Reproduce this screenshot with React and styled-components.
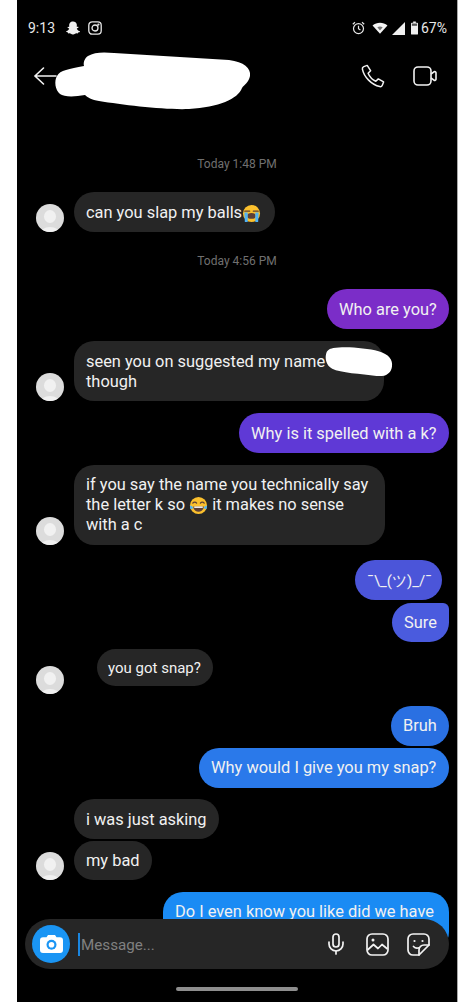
import React from 'react';
import styled, { createGlobalStyle } from 'styled-components';
import { FaSnapchatGhost } from 'react-icons/fa';
import { Mic } from 'lucide-react';

const GlobalStyle = createGlobalStyle`
  html, body {
    margin: 0;
    height: 1002px;
    overflow: hidden;
    background: #fff;
    font-family: Roboto, "Liberation Sans", sans-serif;
  }
`;

const Screen = styled.div`
  position: relative;
  width: 440px;
  height: 1002px;
  margin-left: 17px;
  background: #000;
  overflow: hidden;
  border-right: 1px solid #a8a8a8;
  color: #f1f1f1;
`;

const StatusBar = styled.div`
  display: flex;
  align-items: center;
  justify-content: space-between;
  height: 20px;
  padding: 18px 10px 0 11px;
  font-size: 14px;
  color: #e8e8e8;
`;

const StatusGroup = styled.div`
  display: flex;
  align-items: center;
  gap: ${(props) => props.$gap || 8}px;
`;

const Header = styled.div`
  display: flex;
  align-items: center;
  justify-content: space-between;
  height: 76px;
  padding: 0 20px 0 16px;
`;

const HeaderActions = styled.div`
  display: flex;
  align-items: center;
  gap: 28px;
`;

const Messages = styled.div`
  display: flex;
  flex-direction: column;
  padding: 43px 8px 0 19px;
`;

const Stamp = styled.div`
  height: 14px;
  line-height: 14px;
  text-align: center;
  font-size: 12px;
  color: #707070;
  margin-top: ${(props) => props.$top}px;
  margin-right: 11px;
`;

const Row = styled.div`
  position: relative;
  display: flex;
  align-items: flex-end;
  justify-content: ${(props) => (props.$mine ? 'flex-end' : 'flex-start')};
  margin-top: ${(props) => props.$top}px;
  margin-right: ${(props) => props.$inset || 0}px;
`;

const Avatar = styled.div`
  position: relative;
  flex: none;
  width: 28px;
  height: 28px;
  margin-right: 10px;
  margin-bottom: ${(props) => props.$drop || 0}px;
  border-radius: 50%;
  background: #dcdcdc;
  overflow: hidden;
  visibility: ${(props) => (props.$hidden ? 'hidden' : 'visible')};
  &::before {
    content: '';
    position: absolute;
    left: 8px;
    top: 6px;
    width: 12px;
    height: 13px;
    border-radius: 50%;
    background: #f1f1f1;
  }
  &::after {
    content: '';
    position: absolute;
    left: 4px;
    top: 23px;
    width: 20px;
    height: 14px;
    border-radius: 50%;
    background: #f1f1f1;
  }
`;

const Bubble = styled.div`
  box-sizing: border-box;
  width: ${(props) => props.$width}px;
  height: ${(props) => props.$height || 40}px;
  padding: ${(props) => props.$pad || '11px 12px 9px'};
  border-radius: 20px;
  border-top-right-radius: ${(props) => props.$corner || 20}px;
  background: ${(props) => props.$bg || '#262626'};
  font-size: ${(props) => props.$size || 16.4}px;
  line-height: 20px;
  white-space: pre;
  margin-left: ${(props) => props.$indent || 0}px;
`;

const Emoji = styled.svg`
  display: inline-block;
  vertical-align: middle;
  margin: -4px 0 -3px;
`;

const TitleScribble = styled.svg`
  position: absolute;
  left: 37px;
  top: 51px;
`;

const NameScribble = styled.svg`
  position: absolute;
  left: 289px;
  top: 5px;
`;

const Composer = styled.div`
  position: absolute;
  left: 8px;
  top: 919px;
  box-sizing: border-box;
  width: 424px;
  height: 50px;
  display: flex;
  align-items: center;
  padding: 0 19px 0 7px;
  border-radius: 25px;
  background: #262626;
`;

const CameraButton = styled.div`
  flex: none;
  display: flex;
  align-items: center;
  justify-content: center;
  width: 38px;
  height: 38px;
  border-radius: 50%;
  background: #1a95f4;
`;

const Placeholder = styled.div`
  flex: 1;
  height: 23px;
  line-height: 25px;
  margin-left: 8px;
  padding-left: 1px;
  border-left: 2px solid #1a86e0;
  font-size: 15.2px;
  color: #808080;
`;

const ComposerIcons = styled.div`
  display: flex;
  align-items: center;
  gap: 18px;
`;

const HomeBar = styled.div`
  position: absolute;
  left: 159px;
  top: 987px;
  width: 122px;
  height: 4px;
  border-radius: 2px;
  background: #8e8e8e;
`;

const InstagramGlyph = () => (
  <svg width="14" height="14" viewBox="0 0 14 14" fill="none" stroke="#e8e8e8" strokeWidth="1.3">
    <rect x="0.8" y="0.8" width="12.4" height="12.4" rx="3.4" />
    <circle cx="7" cy="7" r="3" />
    <circle cx="10.4" cy="3.6" r="0.5" fill="#e8e8e8" />
  </svg>
);

const AlarmGlyph = () => (
  <svg width="13" height="14" viewBox="0 0 13 14" fill="none" stroke="#e8e8e8" strokeWidth="1.2">
    <circle cx="6.5" cy="7.6" r="5" />
    <path d="M6.5 4.8v3l1.9 1.3M0.8 3.2 3 1.2M12.2 3.2 10 1.2" />
  </svg>
);

const WifiGlyph = () => (
  <svg width="16" height="14" viewBox="0 0 18 14">
    <path d="M9 13.500.6 4.200C5.400.2 12.600.2 17.400 4.200Z" fill="#f4f4f4" />
    <path d="M9 9.800 6 6.200c1.800-1.300 4.200-1.300 6 0Z" fill="#777" />
  </svg>
);

const SignalGlyph = () => (
  <svg width="13" height="13" viewBox="0 0 13 13">
    <path d="M13 0v13H0Z" fill="#f0f0f0" />
  </svg>
);

const BatteryGlyph = () => (
  <svg width="7" height="14" viewBox="0 0 8 15">
    <path d="M2.500 0h3v1.400H7a1 1 0 0 1 1 1V14a1 1 0 0 1-1 1H1a1 1 0 0 1-1-1V2.400a1 1 0 0 1 1-1h1.500Z" fill="#f0f0f0" />
    <rect x="1" y="2.400" width="6" height="2.600" fill="#555" />
  </svg>
);

const BackArrow = () => (
  <svg width="24" height="20" viewBox="0 0 24 20" fill="none" stroke="#f2f2f2" strokeWidth="1.6" strokeLinecap="round">
    <path d="M23 10H2M10.500 2 2 10l8.500 8" />
  </svg>
);

const PhoneGlyph = () => (
  <svg width="24" height="24" viewBox="0 0 24 24" fill="none" stroke="#f2f2f2" strokeWidth="1.5" strokeLinejoin="round">
    <path d="M6.200 1.400 2.800 2.600c-1 .4-1.600 1.400-1.400 2.500C3 13 10.500 20.800 18.800 22.600c1.100.2 2.100-.4 2.500-1.400l1.300-3.300-5.300-3-2.500 2.400c-3.300-1.500-6.300-4.700-7.700-8l2.500-2.600Z" />
  </svg>
);

const VideoGlyph = () => (
  <svg width="24" height="20" viewBox="0 0 24 20" fill="none" stroke="#f2f2f2" strokeWidth="1.6" strokeLinejoin="round">
    <rect x="1" y="1" width="17" height="18" rx="4" />
    <path d="M18 8 21 5.800c.8-.5 2-.1 2 1v6.400c0 1.100-1.200 1.500-2 1L18 12" />
  </svg>
);

const CameraGlyph = () => (
  <svg width="23" height="18" viewBox="0 0 23 18">
    <path d="M8 0h7l1.500 2.200H20a3 3 0 0 1 3 3V15a3 3 0 0 1-3 3H3a3 3 0 0 1-3-3V5.200a3 3 0 0 1 3-3h3.500Z" fill="#fff" />
    <circle cx="11.500" cy="9.800" r="5" fill="#1a95f4" />
    <circle cx="11.500" cy="9.800" r="2.800" fill="#fff" />
  </svg>
);

const GalleryGlyph = () => (
  <svg width="23" height="23" viewBox="0 0 23 23" fill="none" stroke="#f2f2f2" strokeWidth="1.7" strokeLinejoin="round">
    <rect x="1" y="1" width="21" height="21" rx="5" />
    <circle cx="7" cy="7" r="1.500" fill="#f2f2f2" stroke="none" />
    <path d="M1.500 17 7.500 11.500 12 15.500 16 11.500 21.500 16" />
  </svg>
);

const StickerGlyph = () => (
  <svg width="23" height="23" viewBox="0 0 23 23" fill="none" stroke="#f2f2f2" strokeWidth="1.7" strokeLinejoin="round" strokeLinecap="round">
    <path d="M22 12V6a5 5 0 0 0-5-5H6a5 5 0 0 0-5 5v11a5 5 0 0 0 5 5h6Z" />
    <path d="M22 12h-5a5 5 0 0 0-5 5v5M6.500 13.500c1.500 1.700 3.500 2 5.500 1.300" />
    <circle cx="7.500" cy="8" r="1.100" fill="#f2f2f2" stroke="none" />
    <circle cx="15.500" cy="8" r="1.100" fill="#f2f2f2" stroke="none" />
  </svg>
);

const CryingEmoji = () => (
  <Emoji width="19" height="19" viewBox="0 0 20 20">
    <circle cx="10" cy="10" r="9" fill="#fbc02d" />
    <path d="M3 7.500h5M12 7.500h5" stroke="#5d4037" strokeWidth="1.500" strokeLinecap="round" />
    <ellipse cx="10" cy="12.500" rx="4.500" ry="3" fill="#5d4037" />
    <path d="M2.500 9h3.500v10H3ZM14 9h3.500l-.5 10h-3Z" fill="#4fb3f6" />
  </Emoji>
);

const JoyEmoji = () => (
  <Emoji width="19" height="19" viewBox="0 0 20 20">
    <circle cx="10" cy="10" r="9" fill="#fbc02d" />
    <path d="M4 7.500c1-1.500 3-1.500 4 0M12 7.500c1-1.500 3-1.500 4 0" fill="none" stroke="#5d4037" strokeWidth="1.300" strokeLinecap="round" />
    <path d="M4.500 11h11c0 3.500-2.500 5.500-5.500 5.500S4.500 14.500 4.500 11Z" fill="#5d4037" />
    <path d="M5.500 11h9v1.500h-9Z" fill="#fff" />
    <path d="M1 10c1.500 0 3 1 3.500 3L1.500 14ZM19 10c-1.500 0-3 1-3.500 3l3 1Z" fill="#4fb3f6" />
  </Emoji>
);

const App = () => {
  return (
    <>
      <GlobalStyle />
      <Screen>
        <StatusBar>
          <StatusGroup $gap={11}>
            <span>9:13</span>
            <StatusGroup $gap={8}>
              <FaSnapchatGhost size={14} color="#f0f0f0" />
              <InstagramGlyph />
            </StatusGroup>
          </StatusGroup>
          <StatusGroup $gap={7}>
            <AlarmGlyph />
            <StatusGroup $gap={4}>
              <WifiGlyph />
              <StatusGroup $gap={6}>
                <SignalGlyph />
                <StatusGroup $gap={3}>
                  <BatteryGlyph />
                  <span>67%</span>
                </StatusGroup>
              </StatusGroup>
            </StatusGroup>
          </StatusGroup>
        </StatusBar>
        <Header>
          <BackArrow />
          <HeaderActions>
            <PhoneGlyph />
            <VideoGlyph />
          </HeaderActions>
        </Header>
        <TitleScribble width="198" height="60" viewBox="0 0 198 60">
          <path
            d="M34 5C40 1 50 1 60 2L175 9C190 11 197 17 196 25C195 31 190 34 188 37C184 48 165 56 135 58C110 59 70 54 45 50C38 49 33 46 31 44C20 46 10 46 6 43C1 39 0 30 3 25C6 19 15 18 30 15C29 11 31 7 34 5Z"
            fill="#fff"
          />
        </TitleScribble>
        <Messages>
          <Stamp $top={0}>Today 1:48 PM</Stamp>
          <Row $top={21}>
            <Avatar />
            <Bubble $width={201}>can you slap my balls<CryingEmoji /></Bubble>
          </Row>
          <Stamp $top={22}>Today 4:56 PM</Stamp>
          <Row $mine $top={21}>
            <Bubble $width={122} $bg="#7b2dc8">Who are you?</Bubble>
          </Row>
          <Row $top={12}>
            <Avatar />
            <Bubble $width={310} $height={60}>{'seen you on suggested my name\nthough'}</Bubble>
            <NameScribble width="68" height="31" viewBox="0 0 66 30">
              <path d="M8 2C20 0 40 2 52 5C62 8 66 13 65 20C64 27 58 30 50 29C35 27 15 26 7 22C1 19 0 12 1 8C2 4 4 3 8 2Z" fill="#fff" />
            </NameScribble>
          </Row>
          <Row $mine $top={12}>
            <Bubble $width={210} $bg="#5f39d6">Why is it spelled with a k?</Bubble>
          </Row>
          <Row $top={12}>
            <Avatar />
            <Bubble $width={311} $height={80} $pad="10px 12px">
              {'if you say the name you technically say\nthe letter k so '}<JoyEmoji />{' it makes no sense\nwith a c'}
            </Bubble>
          </Row>
          <Row $mine $top={15} $inset={7}>
            <Bubble $width={87} $bg="#4b55d9" $size={15}>¯\_(ツ)_/¯</Bubble>
          </Row>
          <Row $mine $top={3}>
            <Bubble $width={57} $height={39} $corner={6} $bg="#4a5bde" $pad="9.5px 12px">Sure</Bubble>
          </Row>
          <Row $top={7}>
            <Avatar $drop={-8} />
            <Bubble $width={116} $height={37} $size={15} $indent={23} $pad="8.5px 11px">you got snap?</Bubble>
          </Row>
          <Row $mine $top={20}>
            <Bubble $width={58} $bg="#2a70e2" $pad="10px 12px">Bruh</Bubble>
          </Row>
          <Row $mine $top={2}>
            <Bubble $width={250} $bg="#2a79ea" $pad="10px 12px">Why would I give you my snap?</Bubble>
          </Row>
          <Row $top={11}>
            <Avatar $hidden />
            <Bubble $width={145}>i was just asking</Bubble>
          </Row>
          <Row $top={2}>
            <Avatar />
            <Bubble $width={78} $height={39} $pad="9.5px 12px">my bad</Bubble>
          </Row>
          <Row $mine $top={12}>
            <Bubble $width={286} $height={60} $bg="#1a8bf4" $pad="10px 12px">Do I even know you like did we have</Bubble>
          </Row>
        </Messages>
        <Composer>
          <CameraButton>
            <CameraGlyph />
          </CameraButton>
          <Placeholder>Message...</Placeholder>
          <ComposerIcons>
            <Mic size={24} color="#f2f2f2" strokeWidth={1.7} />
            <GalleryGlyph />
            <StickerGlyph />
          </ComposerIcons>
        </Composer>
        <HomeBar />
      </Screen>
    </>
  );
};

export default App;
